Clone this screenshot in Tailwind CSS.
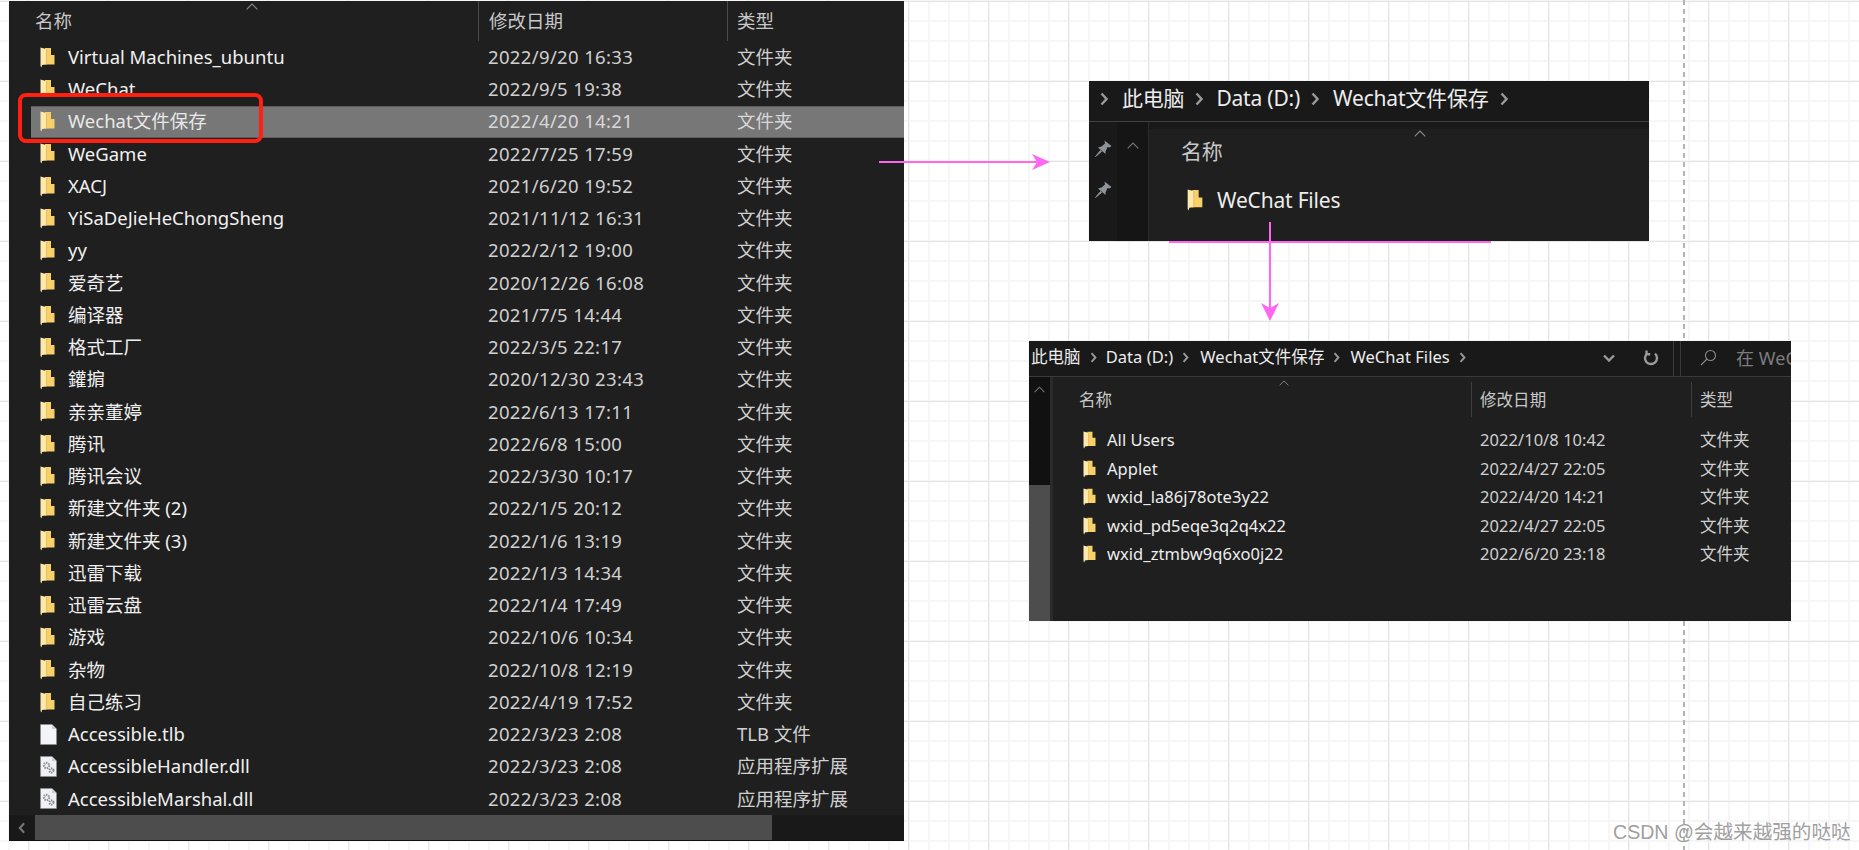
<!DOCTYPE html>
<html lang="zh">
<head>
<meta charset="utf-8">
<title>Wechat</title>
<script src="https://cdn.jsdelivr.net/npm/@tailwindcss/browser@4"></script>
</head>
<body class="m-0 overflow-hidden">
<svg class="absolute w-0 h-0">
  <symbol id="folder" viewBox="0 0 15 21">
    <polygon points="5,1 11,1 11,8 14.5,8 14.5,17.5 5,17.5" fill="#f7d06a"/>
    <polygon points="0.5,0.5 6,2 6,17.5 2,18 1.5,20.5 0.5,19" fill="#fde9ab"/>
    <rect x="6" y="2" width="0.8" height="15.5" fill="#e5b858"/>
  </symbol>
  <symbol id="file" viewBox="0 0 17 21">
    <path d="M0.5 0.5H12L16.5 5V20.5H0.5Z" fill="#f2f4f7" stroke="#8d8f92" stroke-width="0.6"/>
    <path d="M12 0.5V5H16.5Z" fill="#c9ccd0"/>
  </symbol>
  <symbol id="dll" viewBox="0 0 17 21">
    <path d="M0.5 0.5H12L16.5 5V20.5H0.5Z" fill="#eef0f3" stroke="#8d8f92" stroke-width="0.6"/>
    <path d="M12 0.5V5H16.5Z" fill="#c9ccd0"/>
    <circle cx="6.5" cy="9.5" r="2.6" fill="none" stroke="#8c9094" stroke-width="2.2" stroke-dasharray="1.4 0.9"/>
    <circle cx="11.5" cy="14.5" r="2" fill="none" stroke="#7e8388" stroke-width="2" stroke-dasharray="1.2 0.8"/>
  </symbol>
  <symbol id="pin" viewBox="0 0 17 17">
    <path d="M9.5 0.5L16.5 6L14.5 7.5L12.5 7L10.5 11.5L10.5 14L3 7.5L6.5 6.5L10 3.5Z" fill="#8f9499"/>
    <path d="M0.5 16.5L5.5 10.5L6.5 11.5Z" fill="#8f9499" stroke="#8f9499" stroke-width="1"/>
  </symbol>
  <symbol id="chev" viewBox="0 0 8 14">
    <polyline points="1.5,1.5 6.5,7 1.5,12.5" fill="none" stroke="currentColor" stroke-width="2.4"/>
  </symbol>
  <symbol id="up" viewBox="0 0 12 7">
    <polyline points="0.7,6.3 6,1 11.3,6.3" fill="none" stroke="currentColor" stroke-width="1.1"/>
  </symbol>
</svg>

<main class="relative w-[1859px] h-[850px] overflow-hidden bg-white bg-[image:linear-gradient(to_right,#e4e4e4_1.5px,transparent_1.5px),linear-gradient(to_bottom,#e4e4e4_1.5px,transparent_1.5px),linear-gradient(to_right,#f6f6f6_2px,transparent_2px),linear-gradient(to_bottom,#f6f6f6_2px,transparent_2px)] bg-[size:80px_80px,80px_80px,20px_20px,20px_20px] bg-[position:28px_0,0_81px,8px_0,0_0] font-['Noto_Sans','Noto_Sans_CJK_SC',sans-serif]">

  <!-- centre guide -->
  <div class="absolute left-[1683px] top-0 w-[2px] h-[850px] bg-[repeating-linear-gradient(to_bottom,#b4b4b4_0,#b4b4b4_5px,transparent_5px,transparent_9px)]"></div>

  <!-- window 1 -->
  <section class="absolute left-[9px] top-[1px] w-[895px] h-[840px] bg-[#1f1f1f] flex flex-col text-[18.5px] leading-none text-[#f0f0f0]">
    <header class="relative h-[40px] grid grid-cols-[470px_249px_1fr] text-[#c8c8c8] shrink-0">
      <div class="pl-[26px] flex items-center border-r border-[#4a4a4a]">名称</div>
      <div class="pl-[10px] flex items-center border-r border-[#4a4a4a]">修改日期</div>
      <div class="pl-[9px] flex items-center">类型</div>
      <svg class="absolute left-[237px] top-[2px] w-[12px] h-[7px] text-[#8a8a8a]"><use href="#up"/></svg>
    </header>
    <div class="flex-1 pl-[22px]">
      <div class="grid grid-cols-[457px_249px_1fr] h-[32.25px] items-center"><div class="flex items-center gap-[13px] pl-[9px]"><svg class="w-[15px] h-[21px] shrink-0"><use href="#folder"/></svg>Virtual Machines_ubuntu</div><div class="text-[#d0d0d0] tracking-[0.35px]">2022/9/20 16:33</div><div class="text-[#d0d0d0]">文件夹</div></div>
      <div class="grid grid-cols-[457px_249px_1fr] h-[32.25px] items-center"><div class="flex items-center gap-[13px] pl-[9px]"><svg class="w-[15px] h-[21px] shrink-0"><use href="#folder"/></svg>WeChat</div><div class="text-[#d0d0d0] tracking-[0.35px]">2022/9/5 19:38</div><div class="text-[#d0d0d0]">文件夹</div></div>
      <div class="relative z-10 grid grid-cols-[457px_249px_1fr] h-[32.25px] items-center bg-[#777777] border-y border-[#5e5e5e] text-[#e8e8e8]"><div class="flex items-center gap-[13px] pl-[9px]"><svg class="w-[15px] h-[21px] shrink-0"><use href="#folder"/></svg>Wechat文件保存</div><div class="text-[#d8d8d8] tracking-[0.35px]">2022/4/20 14:21</div><div class="text-[#d8d8d8]">文件夹</div></div>
      <div class="grid grid-cols-[457px_249px_1fr] h-[32.25px] items-center"><div class="flex items-center gap-[13px] pl-[9px]"><svg class="w-[15px] h-[21px] shrink-0"><use href="#folder"/></svg>WeGame</div><div class="text-[#d0d0d0] tracking-[0.35px]">2022/7/25 17:59</div><div class="text-[#d0d0d0]">文件夹</div></div>
      <div class="grid grid-cols-[457px_249px_1fr] h-[32.25px] items-center"><div class="flex items-center gap-[13px] pl-[9px]"><svg class="w-[15px] h-[21px] shrink-0"><use href="#folder"/></svg>XACJ</div><div class="text-[#d0d0d0] tracking-[0.35px]">2021/6/20 19:52</div><div class="text-[#d0d0d0]">文件夹</div></div>
      <div class="grid grid-cols-[457px_249px_1fr] h-[32.25px] items-center"><div class="flex items-center gap-[13px] pl-[9px]"><svg class="w-[15px] h-[21px] shrink-0"><use href="#folder"/></svg>YiSaDeJieHeChongSheng</div><div class="text-[#d0d0d0] tracking-[0.35px]">2021/11/12 16:31</div><div class="text-[#d0d0d0]">文件夹</div></div>
      <div class="grid grid-cols-[457px_249px_1fr] h-[32.25px] items-center"><div class="flex items-center gap-[13px] pl-[9px]"><svg class="w-[15px] h-[21px] shrink-0"><use href="#folder"/></svg>yy</div><div class="text-[#d0d0d0] tracking-[0.35px]">2022/2/12 19:00</div><div class="text-[#d0d0d0]">文件夹</div></div>
      <div class="grid grid-cols-[457px_249px_1fr] h-[32.25px] items-center"><div class="flex items-center gap-[13px] pl-[9px]"><svg class="w-[15px] h-[21px] shrink-0"><use href="#folder"/></svg>爱奇艺</div><div class="text-[#d0d0d0] tracking-[0.35px]">2020/12/26 16:08</div><div class="text-[#d0d0d0]">文件夹</div></div>
      <div class="grid grid-cols-[457px_249px_1fr] h-[32.25px] items-center"><div class="flex items-center gap-[13px] pl-[9px]"><svg class="w-[15px] h-[21px] shrink-0"><use href="#folder"/></svg>编译器</div><div class="text-[#d0d0d0] tracking-[0.35px]">2021/7/5 14:44</div><div class="text-[#d0d0d0]">文件夹</div></div>
      <div class="grid grid-cols-[457px_249px_1fr] h-[32.25px] items-center"><div class="flex items-center gap-[13px] pl-[9px]"><svg class="w-[15px] h-[21px] shrink-0"><use href="#folder"/></svg>格式工厂</div><div class="text-[#d0d0d0] tracking-[0.35px]">2022/3/5 22:17</div><div class="text-[#d0d0d0]">文件夹</div></div>
      <div class="grid grid-cols-[457px_249px_1fr] h-[32.25px] items-center"><div class="flex items-center gap-[13px] pl-[9px]"><svg class="w-[15px] h-[21px] shrink-0"><use href="#folder"/></svg>鑵掮</div><div class="text-[#d0d0d0] tracking-[0.35px]">2020/12/30 23:43</div><div class="text-[#d0d0d0]">文件夹</div></div>
      <div class="grid grid-cols-[457px_249px_1fr] h-[32.25px] items-center"><div class="flex items-center gap-[13px] pl-[9px]"><svg class="w-[15px] h-[21px] shrink-0"><use href="#folder"/></svg>亲亲董婷</div><div class="text-[#d0d0d0] tracking-[0.35px]">2022/6/13 17:11</div><div class="text-[#d0d0d0]">文件夹</div></div>
      <div class="grid grid-cols-[457px_249px_1fr] h-[32.25px] items-center"><div class="flex items-center gap-[13px] pl-[9px]"><svg class="w-[15px] h-[21px] shrink-0"><use href="#folder"/></svg>腾讯</div><div class="text-[#d0d0d0] tracking-[0.35px]">2022/6/8 15:00</div><div class="text-[#d0d0d0]">文件夹</div></div>
      <div class="grid grid-cols-[457px_249px_1fr] h-[32.25px] items-center"><div class="flex items-center gap-[13px] pl-[9px]"><svg class="w-[15px] h-[21px] shrink-0"><use href="#folder"/></svg>腾讯会议</div><div class="text-[#d0d0d0] tracking-[0.35px]">2022/3/30 10:17</div><div class="text-[#d0d0d0]">文件夹</div></div>
      <div class="grid grid-cols-[457px_249px_1fr] h-[32.25px] items-center"><div class="flex items-center gap-[13px] pl-[9px]"><svg class="w-[15px] h-[21px] shrink-0"><use href="#folder"/></svg>新建文件夹 (2)</div><div class="text-[#d0d0d0] tracking-[0.35px]">2022/1/5 20:12</div><div class="text-[#d0d0d0]">文件夹</div></div>
      <div class="grid grid-cols-[457px_249px_1fr] h-[32.25px] items-center"><div class="flex items-center gap-[13px] pl-[9px]"><svg class="w-[15px] h-[21px] shrink-0"><use href="#folder"/></svg>新建文件夹 (3)</div><div class="text-[#d0d0d0] tracking-[0.35px]">2022/1/6 13:19</div><div class="text-[#d0d0d0]">文件夹</div></div>
      <div class="grid grid-cols-[457px_249px_1fr] h-[32.25px] items-center"><div class="flex items-center gap-[13px] pl-[9px]"><svg class="w-[15px] h-[21px] shrink-0"><use href="#folder"/></svg>迅雷下载</div><div class="text-[#d0d0d0] tracking-[0.35px]">2022/1/3 14:34</div><div class="text-[#d0d0d0]">文件夹</div></div>
      <div class="grid grid-cols-[457px_249px_1fr] h-[32.25px] items-center"><div class="flex items-center gap-[13px] pl-[9px]"><svg class="w-[15px] h-[21px] shrink-0"><use href="#folder"/></svg>迅雷云盘</div><div class="text-[#d0d0d0] tracking-[0.35px]">2022/1/4 17:49</div><div class="text-[#d0d0d0]">文件夹</div></div>
      <div class="grid grid-cols-[457px_249px_1fr] h-[32.25px] items-center"><div class="flex items-center gap-[13px] pl-[9px]"><svg class="w-[15px] h-[21px] shrink-0"><use href="#folder"/></svg>游戏</div><div class="text-[#d0d0d0] tracking-[0.35px]">2022/10/6 10:34</div><div class="text-[#d0d0d0]">文件夹</div></div>
      <div class="grid grid-cols-[457px_249px_1fr] h-[32.25px] items-center"><div class="flex items-center gap-[13px] pl-[9px]"><svg class="w-[15px] h-[21px] shrink-0"><use href="#folder"/></svg>杂物</div><div class="text-[#d0d0d0] tracking-[0.35px]">2022/10/8 12:19</div><div class="text-[#d0d0d0]">文件夹</div></div>
      <div class="grid grid-cols-[457px_249px_1fr] h-[32.25px] items-center"><div class="flex items-center gap-[13px] pl-[9px]"><svg class="w-[15px] h-[21px] shrink-0"><use href="#folder"/></svg>自己练习</div><div class="text-[#d0d0d0] tracking-[0.35px]">2022/4/19 17:52</div><div class="text-[#d0d0d0]">文件夹</div></div>
      <div class="grid grid-cols-[457px_249px_1fr] h-[32.25px] items-center"><div class="flex items-center gap-[11px] pl-[9px]"><svg class="w-[17px] h-[21px] shrink-0"><use href="#file"/></svg>Accessible.tlb</div><div class="text-[#d0d0d0] tracking-[0.35px]">2022/3/23 2:08</div><div class="text-[#d0d0d0]">TLB 文件</div></div>
      <div class="grid grid-cols-[457px_249px_1fr] h-[32.25px] items-center"><div class="flex items-center gap-[11px] pl-[9px]"><svg class="w-[17px] h-[21px] shrink-0"><use href="#dll"/></svg>AccessibleHandler.dll</div><div class="text-[#d0d0d0] tracking-[0.35px]">2022/3/23 2:08</div><div class="text-[#d0d0d0]">应用程序扩展</div></div>
      <div class="grid grid-cols-[457px_249px_1fr] h-[32.25px] items-center"><div class="flex items-center gap-[11px] pl-[9px]"><svg class="w-[17px] h-[21px] shrink-0"><use href="#dll"/></svg>AccessibleMarshal.dll</div><div class="text-[#d0d0d0] tracking-[0.35px]">2022/3/23 2:08</div><div class="text-[#d0d0d0]">应用程序扩展</div></div>
    </div>
    <footer class="h-[26px] flex bg-[#191919] shrink-0 border-b border-[#111]">
      <div class="w-[26px] flex items-center justify-center text-[#777]"><svg class="w-[8px] h-[12px] rotate-180"><use href="#chev"/></svg></div>
      <div class="w-[737px] bg-[#4d4d4d]"></div>
    </footer>
    <!-- cut-out under the red marker -->
    <div class="absolute left-[9px] top-[92px] w-[245px] h-[13px] bg-[#1f1f1f]"></div>
    <div class="absolute z-20 left-[9px] top-[92px] w-[245px] h-[50px] border-[4px] border-[#ff2012] rounded-[8px]"></div>
  </section>

  <!-- window 2 -->
  <section class="absolute left-[1089px] top-[81px] w-[560px] h-[160px] bg-[#1f1f1f] flex flex-col overflow-hidden text-[21px] tracking-[-0.2px] leading-none text-[#ededed]">
    <div class="h-[41px] shrink-0 flex items-center bg-[#191919] border-b border-[#3f3f3f] text-[#9a9a9a] pb-[5px] whitespace-nowrap">
      <svg class="w-[8px] h-[14px] ml-[11px] shrink-0"><use href="#chev"/></svg>
      <span class="ml-[14px] text-[#ededed]">此电脑</span>
      <svg class="w-[8px] h-[14px] ml-[11px] shrink-0"><use href="#chev"/></svg>
      <span class="ml-[13px] text-[#ededed]">Data (D:)</span>
      <svg class="w-[8px] h-[14px] ml-[11px] shrink-0"><use href="#chev"/></svg>
      <span class="ml-[14px] text-[#ededed]">Wechat文件保存</span>
      <svg class="w-[8px] h-[14px] ml-[12px] shrink-0"><use href="#chev"/></svg>
    </div>
    <div class="flex-1 flex">
      <div class="w-[28px] bg-[#191919] flex flex-col items-center pt-[18px] gap-[24px]">
        <svg class="w-[17px] h-[17px]"><use href="#pin"/></svg>
        <svg class="w-[17px] h-[17px]"><use href="#pin"/></svg>
      </div>
      <div class="w-[32px] bg-[#151515] border-r border-[#2b2b2b] flex justify-center pt-[20px] text-[#777]">
        <svg class="w-[12px] h-[7px]"><use href="#up"/></svg>
      </div>
      <div class="relative flex-1">
        <div class="h-[7px] bg-[#191919]"></div>
        <svg class="absolute left-[265px] top-[8px] w-[12px] h-[7px] text-[#8a8a8a]"><use href="#up"/></svg>
        <div class="pl-[32px] h-[32px] mt-[6px] flex items-center text-[#c8c8c8]">名称</div>
        <div class="pl-[38px] mt-[22px] flex items-center gap-[14px]"><svg class="w-[16px] h-[22px] shrink-0"><use href="#folder"/></svg>WeChat Files</div>
      </div>
    </div>
  </section>

  <!-- window 3 -->
  <section class="absolute left-[1029px] top-[341px] w-[762px] h-[280px] bg-[#1f1f1f] flex flex-col overflow-hidden text-[16.5px] tracking-[0.05px] leading-none text-[#ededed]">
    <div class="h-[36px] shrink-0 flex items-center bg-[#191919] border-b border-[#3a3a3a] text-[#9a9a9a] pb-[2px] whitespace-nowrap">
      <span class="ml-[2px] text-[#ededed]">此电脑</span>
      <svg class="w-[7px] h-[11px] ml-[9px] shrink-0"><use href="#chev"/></svg>
      <span class="ml-[9px] text-[#ededed]">Data (D:)</span>
      <svg class="w-[7px] h-[11px] ml-[9px] shrink-0"><use href="#chev"/></svg>
      <span class="ml-[11px] text-[#ededed]">Wechat文件保存</span>
      <svg class="w-[7px] h-[11px] ml-[9px] shrink-0"><use href="#chev"/></svg>
      <span class="ml-[10px] text-[#ededed]">WeChat Files</span>
      <svg class="w-[7px] h-[11px] ml-[9px] shrink-0"><use href="#chev"/></svg>
      <div class="flex-1 flex justify-end items-center shrink-0">
        <svg class="w-[12px] h-[8px] text-[#9a9a9a] shrink-0" viewBox="0 0 12 8"><polyline points="1,1.5 6,6.5 11,1.5" fill="none" stroke="currentColor" stroke-width="2.4"/></svg>
        <svg class="ml-[28px] w-[16px] h-[16px] text-[#9a9a9a] shrink-0" viewBox="0 0 16 16"><path d="M4.5 3.2A6 6 0 1 0 12 3.6M3.5 0.5V4.2H7.2" fill="none" stroke="currentColor" stroke-width="2.4"/></svg>
        <div class="ml-[14px] h-[36px] w-[8px] border-x border-[#3a3a3a] -mb-[2px] shrink-0"></div>
        <svg class="ml-[19px] w-[17px] h-[17px] text-[#8a8a8a] shrink-0" viewBox="0 0 17 17"><circle cx="10.5" cy="6.5" r="5" fill="none" stroke="currentColor" stroke-width="1.1"/><line x1="7" y1="10" x2="1" y2="16" stroke="currentColor" stroke-width="1.1"/></svg>
        <span class="ml-[19px] w-[55px] overflow-hidden text-[#7d7d7d] text-[18px]">在 WeC</span>
      </div>
    </div>
    <div class="flex-1 flex min-h-0">
      <div class="w-[24px] bg-[#111111] border-r-[3px] border-[#2a2a2a] flex flex-col shrink-0">
        <div class="h-[108px] flex justify-center pt-[9px] text-[#777]"><svg class="w-[11px] h-[7px]"><use href="#up"/></svg></div>
        <div class="flex-1 bg-[#4d4d4d]"></div>
      </div>
      <div class="relative flex-1 pt-[5px]">
        <svg class="absolute left-[226px] top-[3px] w-[10px] h-[6px] text-[#8a8a8a]"><use href="#up"/></svg>
        <div class="grid grid-cols-[419px_220px_1fr] h-[35px] text-[#c8c8c8]">
          <div class="pl-[26px] flex items-center border-r border-[#3f3f3f] pt-[1px]">名称</div>
          <div class="pl-[8px] flex items-center border-r border-[#3f3f3f] pt-[1px]">修改日期</div>
          <div class="pl-[8px] flex items-center pt-[1px]">类型</div>
        </div>
        <div class="pt-[9px]">
          <div class="grid grid-cols-[427px_220px_1fr] h-[28.5px] items-center"><div class="flex items-center gap-[11px] pl-[30px]"><svg class="w-[13px] h-[18px] shrink-0"><use href="#folder"/></svg>All Users</div><div class="text-[#d0d0d0]">2022/10/8 10:42</div><div class="text-[#d0d0d0]">文件夹</div></div>
          <div class="grid grid-cols-[427px_220px_1fr] h-[28.5px] items-center"><div class="flex items-center gap-[11px] pl-[30px]"><svg class="w-[13px] h-[18px] shrink-0"><use href="#folder"/></svg>Applet</div><div class="text-[#d0d0d0]">2022/4/27 22:05</div><div class="text-[#d0d0d0]">文件夹</div></div>
          <div class="grid grid-cols-[427px_220px_1fr] h-[28.5px] items-center"><div class="flex items-center gap-[11px] pl-[30px]"><svg class="w-[13px] h-[18px] shrink-0"><use href="#folder"/></svg>wxid_la86j78ote3y22</div><div class="text-[#d0d0d0]">2022/4/20 14:21</div><div class="text-[#d0d0d0]">文件夹</div></div>
          <div class="grid grid-cols-[427px_220px_1fr] h-[28.5px] items-center"><div class="flex items-center gap-[11px] pl-[30px]"><svg class="w-[13px] h-[18px] shrink-0"><use href="#folder"/></svg>wxid_pd5eqe3q2q4x22</div><div class="text-[#d0d0d0]">2022/4/27 22:05</div><div class="text-[#d0d0d0]">文件夹</div></div>
          <div class="grid grid-cols-[427px_220px_1fr] h-[28.5px] items-center"><div class="flex items-center gap-[11px] pl-[30px]"><svg class="w-[13px] h-[18px] shrink-0"><use href="#folder"/></svg>wxid_ztmbw9q6xo0j22</div><div class="text-[#d0d0d0]">2022/6/20 23:18</div><div class="text-[#d0d0d0]">文件夹</div></div>
        </div>
      </div>
    </div>
  </section>

  <!-- arrows -->
  <svg class="absolute left-0 top-0 w-[1859px] h-[850px] pointer-events-none" viewBox="0 0 1859 850">
    <line x1="879" y1="162" x2="1040" y2="162" stroke="#ff66f2" stroke-width="2"/>
    <polygon points="1050,162 1032,154 1037,162 1032,170" fill="#ff66f2"/>
    <line x1="1169" y1="242" x2="1491" y2="242" stroke="#ff66f2" stroke-width="2"/>
    <line x1="1270" y1="222" x2="1270" y2="310" stroke="#ff66f2" stroke-width="2"/>
    <polygon points="1270,321 1261,303 1270,308 1279,303" fill="#ff66f2"/>
  </svg>

  <!-- watermark -->
  <div class="absolute left-[1613px] top-[820px] text-[19.6px] leading-[24px] text-[#a0a0a0] whitespace-nowrap font-['Liberation_Sans','Noto_Sans_CJK_SC',sans-serif]">CSDN @会越来越强的哒哒</div>
</main>
</body>
</html>
